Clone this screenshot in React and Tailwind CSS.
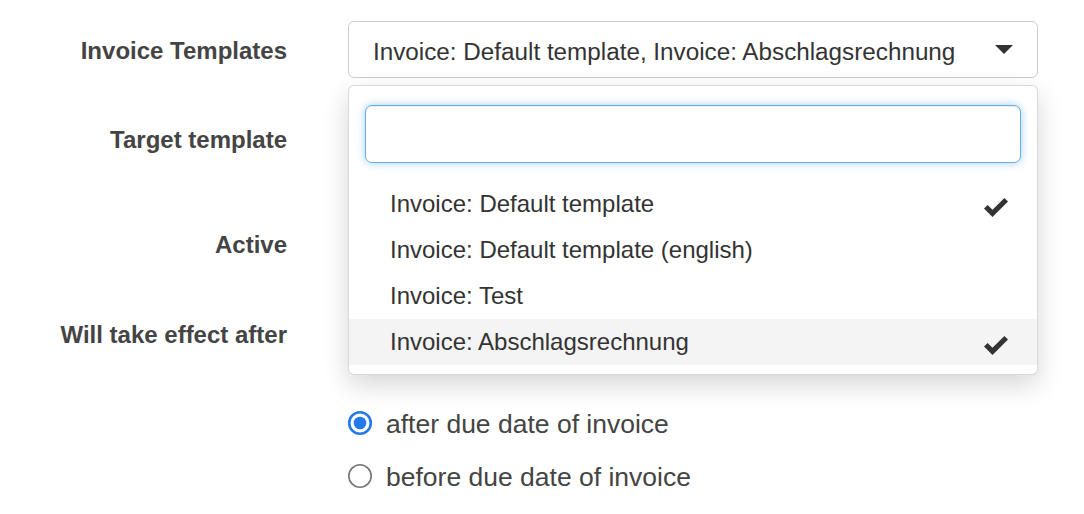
import React from "react";

function Check() {
  return (
    <svg width="24" height="20" viewBox="0 0 24 20" className="mt-[7px]">
      <polygon points="0,10.5 3.6,7 8.5,11.8 20.4,0 24,3.6 8.5,19" fill="#333" />
    </svg>
  );
}

function Radio({ checked }) {
  return (
    <svg width="26" height="26" viewBox="0 0 26 26" className="shrink-0 -mt-[5px]">
      {checked ? (
        <>
          <circle cx="13" cy="13" r="10.8" fill="white" stroke="#2379ea" strokeWidth="2.6" />
          <circle cx="13" cy="13" r="6.3" fill="#2379ea" />
        </>
      ) : (
        <circle cx="13" cy="13" r="11.2" fill="white" stroke="#777" strokeWidth="1.6" />
      )}
    </svg>
  );
}

const items = [
  { label: "Invoice: Default template", checked: true },
  { label: "Invoice: Default template (english)" },
  { label: "Invoice: Test" },
  { label: "Invoice: Abschlagsrechnung", checked: true, active: true },
];

function Label({ children }) {
  return (
    <div className="w-[287px] shrink-0 text-right font-bold text-[24px] text-[#444] leading-none translate-y-[1px]">
      {children}
    </div>
  );
}

export default function App() {
  return (
    <div className="w-[1084px] h-[514px] bg-white overflow-hidden font-['Liberation_Sans','Arial',sans-serif] pt-[21px]">
      {/* Row 1 */}
      <div className="flex items-center">
        <Label>Invoice Templates</Label>
        <div className="ml-[61px] w-[690px] relative">
          <div className="h-[57px] border border-[#ccc] rounded-[6px] bg-white flex items-center pl-[24px] pr-[24px]">
            <span className="text-[24.25px] text-[#333] flex-1 truncate translate-y-[3px]">
              Invoice: Default template, Invoice: Abschlagsrechnung
            </span>
            <svg width="18" height="9" viewBox="0 0 18 9">
              <polygon points="0,0 18,0 9,9" fill="#333" />
            </svg>
          </div>
          {/* Dropdown */}
          <div className="absolute z-10 left-0 top-[64px] w-[690px] bg-white border border-black/15 rounded-[6px] shadow-[0_10px_26px_rgba(0,0,0,0.16)] pt-[19px] pb-[9px]">
            <div className="px-[16px]">
              <div className="h-[58px] border border-[#66afe9] rounded-[7px] bg-white shadow-[inset_0_1px_1px_rgba(0,0,0,0.075),0_0_9px_rgba(102,175,233,0.6)]" />
            </div>
            <div className="mt-[18px]">
              {items.map((it) => (
                <div
                  key={it.label}
                  className={
                    "h-[46px] flex items-center justify-between pl-[41px] pr-[29px] text-[24px] text-[#333] " +
                    (it.active ? "bg-[#f4f4f4]" : "")
                  }
                >
                  <span>{it.label}</span>
                  {it.checked ? <Check /> : null}
                </div>
              ))}
            </div>
          </div>
        </div>
      </div>

      {/* Row 2 */}
      <div className="flex items-center mt-[32px]">
        <Label>Target template</Label>
        <div className="ml-[61px] w-[690px]">
          <div className="h-[57px] border border-[#ccc] rounded-[6px] bg-white" />
        </div>
      </div>

      {/* Row 3 */}
      <div className="flex items-center mt-[59px]">
        <Label>Active</Label>
        <div className="ml-[61px] w-[690px]">
          <div className="h-[36px] w-[110px] rounded-[7px] bg-[#5cb85c] border border-[#4cae4c]" />
        </div>
      </div>

      {/* Row 4 */}
      <div className="flex items-center mt-[43px]">
        <Label>Will take effect after</Label>
        <div className="ml-[61px] w-[690px]">
          <div className="h-[57px] border border-[#ccc] rounded-[6px] bg-white" />
        </div>
      </div>

      {/* Row 5 radios */}
      <div className="flex mt-[43px]">
        <div className="w-[287px] shrink-0" />
        <div className="ml-[60px] flex flex-col gap-[13px]">
          <div className="h-[40px] flex items-center gap-[13px]">
            <Radio checked />
            <span className="text-[26.5px] text-[#444]">after due date of invoice</span>
          </div>
          <div className="h-[40px] flex items-center gap-[13px]">
            <Radio />
            <span className="text-[26.5px] text-[#444]">before due date of invoice</span>
          </div>
        </div>
      </div>
    </div>
  );
}
